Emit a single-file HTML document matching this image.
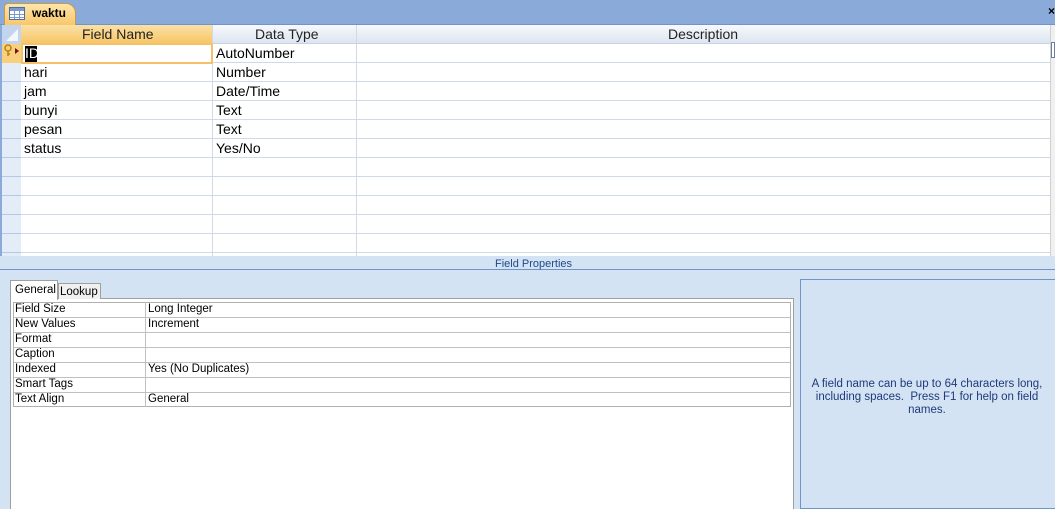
<!DOCTYPE html>
<html><head><style>
body{margin:0;width:1055px;height:509px;overflow:hidden;background:#d3e3f3;font-family:"Liberation Sans",sans-serif;position:relative}
div{position:absolute;box-sizing:border-box}
.t{font-size:14px;color:#000;white-space:nowrap}
.p{font-size:11.5px;color:#000;white-space:nowrap}
</style></head><body>
<div style="left:0;top:0;width:1055px;height:25px;background:#8aabd9;border-bottom:1px solid #6f94c8"></div>
<div style="left:4px;top:3px;width:72px;height:23px;background:linear-gradient(#fde6a8,#f8c56a);border:1px solid #c89a4a;border-bottom:none;border-radius:4px 10px 0 0"></div>
<svg style="position:absolute;left:9px;top:7px" width="16" height="13"><rect x="0.5" y="0.5" width="15" height="12" fill="#fff" stroke="#4a6fa8"/><rect x="1" y="1" width="14" height="3" fill="#7a9ad0"/><path d="M1 7.5H15M1 10.5H15M5.5 4V12M10.5 4V12" stroke="#7a9ad0"/></svg>
<div class="t" style="left:32px;top:6px;font-weight:bold;font-size:12px">waktu</div>
<div style="left:1048px;top:4px;font-size:12px;font-weight:bold">×</div>
<div style="left:0;top:25px;width:1050px;height:231px;background:#fff;border-left:2px solid #8aabd9"></div>
<div style="left:2px;top:25px;width:19px;height:231px;background:#e4ecf7;background-image:repeating-linear-gradient(transparent 0 18px,#b7c9e2 18px 19px);background-position:0 0"></div>
<div style="left:21px;top:25px;width:1029px;height:19px;background:linear-gradient(#f7f9fc,#dde5f0);border-bottom:1px solid #c5d2e3"></div>
<div style="left:21px;top:25px;width:191px;height:19px;background:linear-gradient(#fbe1a6,#f7c564)"></div>
<div style="left:2px;top:25px;width:19px;height:19px;background:#c3d5ee"></div>
<svg style="position:absolute;left:5px;top:28px" width="14" height="14"><path d="M13 1V13H1Z" fill="#fff" opacity=".8"/></svg>
<div style="left:2px;top:44px;width:19px;height:19px;background:#f8cf7c"></div>
<svg style="position:absolute;left:3px;top:44px" width="18" height="14"><circle cx="5" cy="4" r="3" fill="none" stroke="#b8860b" stroke-width="1.5"/><path d="M5 7V12M5 10H7" stroke="#b8860b" stroke-width="1.5"/><path d="M12 4L16 7L12 10Z" fill="#7a1010"/></svg>
<div style="left:21px;top:44px;width:1029px;height:212px;background-image:repeating-linear-gradient(transparent 0 18px,#d0d9e6 18px 19px)"></div>
<div style="left:212px;top:25px;width:1px;height:231px;background:#d0d9e6"></div>
<div style="left:356px;top:25px;width:1px;height:231px;background:#d0d9e6"></div>
<div style="left:21px;top:43px;width:192px;height:21px;border:2px solid #f6bf6a"></div>
<div class="t" style="left:82px;top:26px;color:#222">Field Name</div>
<div class="t" style="left:255px;top:26px;color:#222">Data Type</div>
<div class="t" style="left:668px;top:26px;color:#222">Description</div>
<div style="left:25px;top:46px;width:12px;height:16px;background:#000"></div>
<div class="t" style="left:25px;top:45px;color:#fff">ID</div>
<div class="t" style="left:216px;top:45px">AutoNumber</div>
<div class="t" style="left:24px;top:64px">hari</div><div class="t" style="left:216px;top:64px">Number</div>
<div class="t" style="left:24px;top:83px">jam</div><div class="t" style="left:216px;top:83px">Date/Time</div>
<div class="t" style="left:24px;top:102px">bunyi</div><div class="t" style="left:216px;top:102px">Text</div>
<div class="t" style="left:24px;top:121px">pesan</div><div class="t" style="left:216px;top:121px">Text</div>
<div class="t" style="left:24px;top:140px">status</div><div class="t" style="left:216px;top:140px">Yes/No</div>
<div style="left:1050px;top:25px;width:5px;height:231px;background:#f0f0f0;border-left:1px solid #d0d0d0"></div>
<div style="left:1051px;top:42px;width:4px;height:16px;border:1px solid #6a7fa0;background:#fff"></div>
<div style="left:0;top:256px;width:1055px;height:14px;border-bottom:1px solid #6f94c8"></div>
<div class="p" style="left:495px;top:258px;color:#1f4a8a;font-size:11px">Field Properties</div>
<div style="left:10px;top:298px;width:784px;height:211px;background:#fff;border-left:1px solid #a0a0a0;border-top:1px solid #a0a0a0;border-right:1px solid #a0a0a0"></div>
<div style="left:10px;top:280px;width:48px;height:20px;background:#fff;border:1px solid #a0a0a0;border-bottom:none"></div>
<div class="p" style="left:15px;top:284px">General</div>
<div style="left:58px;top:283px;width:43px;height:16px;background:#f0f0f0;border:1px solid #a0a0a0;border-bottom:none"></div>
<div class="p" style="left:60px;top:286px">Lookup</div>
<div style="left:13px;top:302px;width:778px;height:105px;border:1px solid #b0b0b0;background-image:repeating-linear-gradient(transparent 0 14px,#c0c0c0 14px 15px)"></div>
<div style="left:145px;top:302px;width:1px;height:105px;background:#c0c0c0"></div>
<div class="p" style="left:15px;top:303px">Field Size</div><div class="p" style="left:148px;top:303px">Long Integer</div>
<div class="p" style="left:15px;top:318px">New Values</div><div class="p" style="left:148px;top:318px">Increment</div>
<div class="p" style="left:15px;top:333px">Format</div>
<div class="p" style="left:15px;top:348px">Caption</div>
<div class="p" style="left:15px;top:363px">Indexed</div><div class="p" style="left:148px;top:363px">Yes (No Duplicates)</div>
<div class="p" style="left:15px;top:378px">Smart Tags</div>
<div class="p" style="left:15px;top:393px">Text Align</div><div class="p" style="left:148px;top:393px">General</div>
<div style="left:800px;top:279px;width:255px;height:230px;border:1px solid #6f94c8;border-right:none"></div>
<div style="left:802px;top:378px;width:250px;font-size:11.5px;line-height:13px;color:#1f3a7a;text-align:center">A field name can be up to 64 characters long, including spaces.&nbsp; Press F1 for help on field names.</div>
</body></html>
